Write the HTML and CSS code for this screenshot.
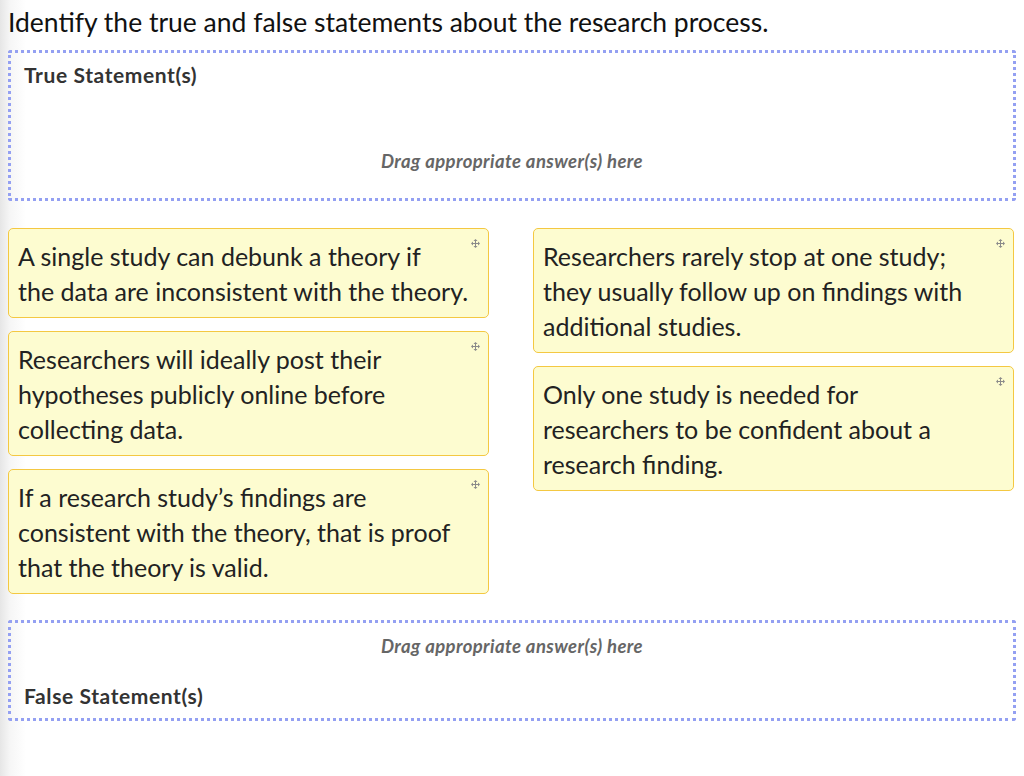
FILE: index.html
```html
<!DOCTYPE html>
<html lang="en">
<head>
<meta charset="utf-8">
<title>Research process</title>
<link rel="stylesheet" href="styles.css">
</head>
<body>
<div class="page">
  <h1 class="title">Identify the true and false statements about the research process.</h1>

  <div class="zone zone-top">
    <div class="zone-label">True Statement(s)</div>
    <div class="zone-hint">Drag appropriate answer(s) here</div>
  </div>

  <div class="cards">
    <div class="col">
      <div class="card">
        <span class="grip"><svg viewBox="0 0 9 9" width="9" height="9"><path d="M4.5 0 L6.5 2 H5 V4 H7 V2.5 L9 4.5 L7 6.5 V5 H5 V7 H6.5 L4.5 9 L2.5 7 H4 V5 H2 V6.5 L0 4.5 L2 2.5 V4 H4 V2 H2.5 Z" fill="#8a8a8a"/></svg></span>
        <p>A single study can debunk a theory if the data are inconsistent with the theory.</p>
      </div>
      <div class="card">
        <span class="grip"><svg viewBox="0 0 9 9" width="9" height="9"><path d="M4.5 0 L6.5 2 H5 V4 H7 V2.5 L9 4.5 L7 6.5 V5 H5 V7 H6.5 L4.5 9 L2.5 7 H4 V5 H2 V6.5 L0 4.5 L2 2.5 V4 H4 V2 H2.5 Z" fill="#8a8a8a"/></svg></span>
        <p>Researchers will ideally post their hypotheses publicly online before collecting data.</p>
      </div>
      <div class="card">
        <span class="grip"><svg viewBox="0 0 9 9" width="9" height="9"><path d="M4.5 0 L6.5 2 H5 V4 H7 V2.5 L9 4.5 L7 6.5 V5 H5 V7 H6.5 L4.5 9 L2.5 7 H4 V5 H2 V6.5 L0 4.5 L2 2.5 V4 H4 V2 H2.5 Z" fill="#8a8a8a"/></svg></span>
        <p>If a research study’s findings are consistent with the theory, that is proof that the theory is valid.</p>
      </div>
    </div>
    <div class="col">
      <div class="card">
        <span class="grip"><svg viewBox="0 0 9 9" width="9" height="9"><path d="M4.5 0 L6.5 2 H5 V4 H7 V2.5 L9 4.5 L7 6.5 V5 H5 V7 H6.5 L4.5 9 L2.5 7 H4 V5 H2 V6.5 L0 4.5 L2 2.5 V4 H4 V2 H2.5 Z" fill="#8a8a8a"/></svg></span>
        <p>Researchers rarely stop at one study; they usually follow up on findings with additional studies.</p>
      </div>
      <div class="card">
        <span class="grip"><svg viewBox="0 0 9 9" width="9" height="9"><path d="M4.5 0 L6.5 2 H5 V4 H7 V2.5 L9 4.5 L7 6.5 V5 H5 V7 H6.5 L4.5 9 L2.5 7 H4 V5 H2 V6.5 L0 4.5 L2 2.5 V4 H4 V2 H2.5 Z" fill="#8a8a8a"/></svg></span>
        <p>Only one study is needed for researchers to be confident about a research finding.</p>
      </div>
    </div>
  </div>

  <div class="zone zone-bottom">
    <div class="zone-hint">Drag appropriate answer(s) here</div>
    <div class="zone-label">False Statement(s)</div>
  </div>
</div>
</body>
</html>
```

FILE: styles.css
```css
html, body {
  margin: 0;
  padding: 0;
  height: 100%;
}
body {
  background: linear-gradient(to right, #e6e6e6 0px, #f6f6f6 10px, #ffffff 26px);
  font-family: "Lato", "Liberation Sans", sans-serif;
  color: #222;
}
.page {
  padding: 0 8px 0 8px;
}
.title {
  margin: 0;
  padding-top: 8px;
  font-size: 26.5px;
  font-weight: 400;
  line-height: 28px;
  color: #111;
}
.zone {
  margin-top: 14px;
  border: 3px dotted #94a0f2;
  border-radius: 3px;
  box-sizing: border-box;
  display: flex;
  flex-direction: column;
}
.zone-top {
  height: 151px;
  padding: 9px 13px 0 13px;
}
.zone-bottom {
  margin-top: 26px;
  height: 101px;
  padding: 12px 13px 0 13px;
}
.zone-label {
  font-size: 21px;
  font-weight: 700;
  line-height: 26px;
  color: #333;
  letter-spacing: 0.6px;
}
.zone-hint {
  text-align: center;
  font-size: 18.5px;
  font-weight: 700;
  font-style: italic;
  color: #666;
  line-height: 22px;
  letter-spacing: 0.4px;
}
.zone-top .zone-hint {
  margin-top: 62px;
}
.zone-bottom .zone-hint {
  margin-bottom: 26px;
}
.cards {
  display: grid;
  grid-template-columns: 481px 481px;
  column-gap: 44px;
  margin-top: 27px;
  align-items: start;
}
.col {
  display: flex;
  flex-direction: column;
  gap: 13px;
}
.card {
  background: #fdfcd0;
  border: 1px solid #f4c842;
  border-radius: 5px;
  padding: 10px 10px 8px 9px;
}
.grip {
  float: right;
  width: 30px;
  height: 24px;
  margin-right: -2px;
  display: flex;
  justify-content: flex-end;
  align-items: flex-start;
  padding-top: 0;
}
.card p {
  margin: 0;
  font-size: 25px;
  line-height: 35px;
  color: #222;
}
```
